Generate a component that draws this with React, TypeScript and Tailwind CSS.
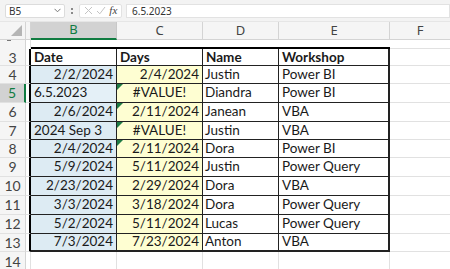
import React from "react";

const W = ["w-[26px]", "w-[5px]", "w-[86px]", "w-[86px]", "w-[76px]", "w-[111px]", "w-[60px]"];

type Data = {
  b: string;
  bLeft?: boolean;
  c: string;
  cCenter?: boolean;
  tri?: boolean;
  d: string;
  e: string;
  h: string;
};

const rows: Data[] = [
  { b: "2/2/2024", c: "2/4/2024", d: "Justin", e: "Power BI", h: "h-[18px]" },
  { b: "6.5.2023", bLeft: true, c: "#VALUE!", cCenter: true, tri: true, d: "Diandra", e: "Power BI", h: "h-[19px]" },
  { b: "2/6/2024", c: "2/11/2024", tri: true, d: "Janean", e: "VBA", h: "h-[19px]" },
  { b: "2024 Sep 3", bLeft: true, c: "#VALUE!", cCenter: true, tri: true, d: "Justin", e: "VBA", h: "h-[18px]" },
  { b: "2/4/2024", c: "2/11/2024", tri: true, d: "Dora", e: "Power BI", h: "h-[18px]" },
  { b: "5/9/2024", c: "5/11/2024", d: "Justin", e: "Power Query", h: "h-[19px]" },
  { b: "2/23/2024", c: "2/29/2024", d: "Dora", e: "VBA", h: "h-[19px]" },
  { b: "3/3/2024", c: "3/18/2024", d: "Dora", e: "Power Query", h: "h-[19px]" },
  { b: "5/2/2024", c: "5/11/2024", d: "Lucas", e: "Power Query", h: "h-[19px]" },
  { b: "7/3/2024", c: "7/23/2024", d: "Anton", e: "VBA", h: "h-[18px]" },
];

const cellFont = { fontFamily: "Lato, 'Open Sans', sans-serif" };

function RowHead({ n, sel }: { n: number; sel?: boolean }) {
  return (
    <div
      className={`${W[0]} shrink-0 flex items-center justify-center text-[14px] border-b border-[#e1e1e1] ${
        sel ? "bg-[#d2d2d2] text-[#107c41] border-r-2 border-r-[#107c41]" : "bg-[#f5f5f5] text-[#444] border-r border-r-[#d4d4d4]"
      }`}
      style={cellFont}
    >
      {n}
    </div>
  );
}

function Tri() {
  return (
    <div className="absolute left-0 top-0 w-0 h-0 border-t-[6px] border-t-[#1e7b45] border-r-[6px] border-r-transparent" />
  );
}

export default function App() {
  return (
    <div className="w-[450px] h-[269px] overflow-hidden bg-white text-[#1a1a1a] flex flex-col" style={cellFont}>
      {/* formula bar */}
      <div className="h-[21px] shrink-0 bg-[#f3f3f3] flex items-center text-[10px] text-[#333]" style={{ fontFamily: "'Noto Sans', sans-serif" }}>
        <div className="ml-[5px] w-[60px] h-[14px] bg-white border border-[#dcdcdc] rounded-[2px] flex items-center justify-between pl-[3px] pr-[3px]">
          <span className="leading-none">B5</span>
          <svg width="7" height="5" viewBox="0 0 7 5">
            <path d="M0.5 0.8 L3.5 3.8 L6.5 0.8" stroke="#777" strokeWidth="1" fill="none" />
          </svg>
        </div>
        <div className="w-[14px] flex flex-col items-center justify-center gap-[2px]">
          <div className="w-[2px] h-[2px] bg-[#666] rounded-full" />
          <div className="w-[2px] h-[2px] bg-[#666] rounded-full" />
        </div>
        <div className="w-[43px] h-[14px] bg-white border border-[#e2e2e2] rounded-[2px] flex items-center justify-around px-[2px]">
          <svg width="9" height="9" viewBox="0 0 9 9">
            <path d="M1 1 L8 8 M8 1 L1 8" stroke="#c4c4c4" strokeWidth="1" />
          </svg>
          <svg width="10" height="9" viewBox="0 0 10 9">
            <path d="M1 5 L3.8 7.8 L9 1" stroke="#c4c4c4" strokeWidth="1" fill="none" />
          </svg>
          <span className="italic text-[11px] text-[#444] leading-none" style={{ fontFamily: "'Liberation Serif', serif" }}>
            fx
          </span>
        </div>
        <div className="ml-[4px] flex-1 h-[14px] bg-white border border-[#e2e2e2] flex items-center pl-[5px]">
          <span className="leading-none">6.5.2023</span>
        </div>
      </div>
      <div className="h-[1px] shrink-0 bg-[#e6e6e6]" />
      {/* column headers */}
      <div className="h-[18px] shrink-0 flex bg-[#f5f5f5] text-[13px] text-[#444]" style={{ fontFamily: "'Noto Sans', sans-serif" }}>
        <div className={`${W[0]} shrink-0 relative border-r border-[#d4d4d4] border-b border-b-[#d4d4d4]`}>
          <div className="absolute right-[3px] bottom-[3px] w-0 h-0 border-b-[11px] border-b-[#b5b5b5] border-l-[11px] border-l-transparent" />
        </div>
        <div className={`${W[1]} shrink-0 border-r border-[#d4d4d4] border-b border-b-[#d4d4d4]`} />
        <div className={`${W[2]} shrink-0 flex items-center justify-center bg-[#d2d2d2] text-[#107c41] border-b-2 border-[#107c41] border-r border-r-[#c8c8c8]`}>B</div>
        <div className={`${W[3]} shrink-0 flex items-center justify-center border-r border-[#d4d4d4] border-b border-b-[#d4d4d4]`}>C</div>
        <div className={`${W[4]} shrink-0 flex items-center justify-center border-r border-[#d4d4d4] border-b border-b-[#d4d4d4]`}>D</div>
        <div className={`${W[5]} shrink-0 flex items-center justify-center border-r border-[#d4d4d4] border-b border-b-[#d4d4d4]`}>E</div>
        <div className={`${W[6]} shrink-0 flex items-center justify-center border-b border-b-[#d4d4d4]`}>F</div>
      </div>
      {/* row 2 (partial, only the foot of its label shows) */}
      <div className="h-[9px] shrink-0 flex overflow-hidden">
        <div className={`${W[0]} shrink-0 bg-[#f5f5f5] border-r border-[#d4d4d4] flex justify-center pt-[0px]`}>
          <div className="w-[4px] h-[1px] bg-[#777] ml-[-8px]" />
        </div>
        <div className={`${W[1]} shrink-0 border-r border-[#e1e1e1]`} />
        <div className={`${W[2]} shrink-0 border-b-2 border-black`} />
        <div className={`${W[3]} shrink-0 border-b-2 border-black`} />
        <div className={`${W[4]} shrink-0 border-b-2 border-black`} />
        <div className={`${W[5]} shrink-0 border-b-2 border-black`} />
        <div className={`${W[6]} shrink-0 border-b border-[#e1e1e1]`} />
      </div>
      {/* row 3 header */}
      <div className="h-[17px] shrink-0 flex text-[13.5px]">
        <RowHead n={3} />
        <div className={`${W[1]} shrink-0 border-r-2 border-black border-b border-b-[#e1e1e1]`} />
        <div className={`${W[2]} shrink-0 flex items-center pl-[3px] font-bold border-r border-b border-[#222]`}>Date</div>
        <div className={`${W[3]} shrink-0 flex items-center pl-[3px] font-bold border-r border-b border-[#222]`}>Days</div>
        <div className={`${W[4]} shrink-0 flex items-center pl-[3px] font-bold border-r border-b border-[#222]`}>Name</div>
        <div className={`${W[5]} shrink-0 flex items-center pl-[3px] font-bold border-r-2 border-b border-[#222]`}>Workshop</div>
        <div className={`${W[6]} shrink-0 border-b border-[#e1e1e1]`} />
      </div>
      {rows.map((r, i) => {
        const n = i + 4;
        const last = i === rows.length - 1;
        const bb = last ? "border-b-2" : "border-b";
        const sel = n === 5;
        return (
          <div key={n} className={`${r.h} shrink-0 flex text-[13.5px] leading-none`}>
            <RowHead n={n} sel={sel} />
            <div className={`${W[1]} shrink-0 border-r-2 border-black border-b border-b-[#e1e1e1]`} />
            <div
              className={`${W[2]} shrink-0 flex items-center px-[3px] border-r ${bb} border-[#222] ${
                r.bLeft ? "justify-start" : "justify-end"
              } ${sel ? "bg-[#e4f0f7]" : "bg-[#ddebf3]"}`}
            >
              {r.b}
            </div>
            <div
              className={`${W[3]} relative shrink-0 flex items-center px-[3px] bg-[#fefed2] border-r ${bb} border-[#222] ${
                r.cCenter ? "justify-center" : "justify-end"
              }`}
            >
              {r.tri && <Tri />}
              {r.c}
            </div>
            <div className={`${W[4]} shrink-0 flex items-center pl-[2px] border-r ${bb} border-[#222]`}>{r.d}</div>
            <div className={`${W[5]} shrink-0 flex items-center pl-[3px] border-r-2 ${bb} border-[#222]`}>{r.e}</div>
            <div className={`${W[6]} shrink-0 border-b border-[#e1e1e1]`} />
          </div>
        );
      })}
      {/* row 14 */}
      <div className="h-[19px] shrink-0 flex text-[14px]">
        <RowHead n={14} />
        <div className={`${W[1]} shrink-0 border-r border-[#e1e1e1]`} />
        <div className={`${W[2]} shrink-0 border-r border-[#e1e1e1]`} />
        <div className={`${W[3]} shrink-0 border-r border-[#e1e1e1]`} />
        <div className={`${W[4]} shrink-0 border-r border-[#e1e1e1]`} />
        <div className={`${W[5]} shrink-0 border-r border-[#e1e1e1]`} />
        <div className={`${W[6]} shrink-0`} />
      </div>
    </div>
  );
}
